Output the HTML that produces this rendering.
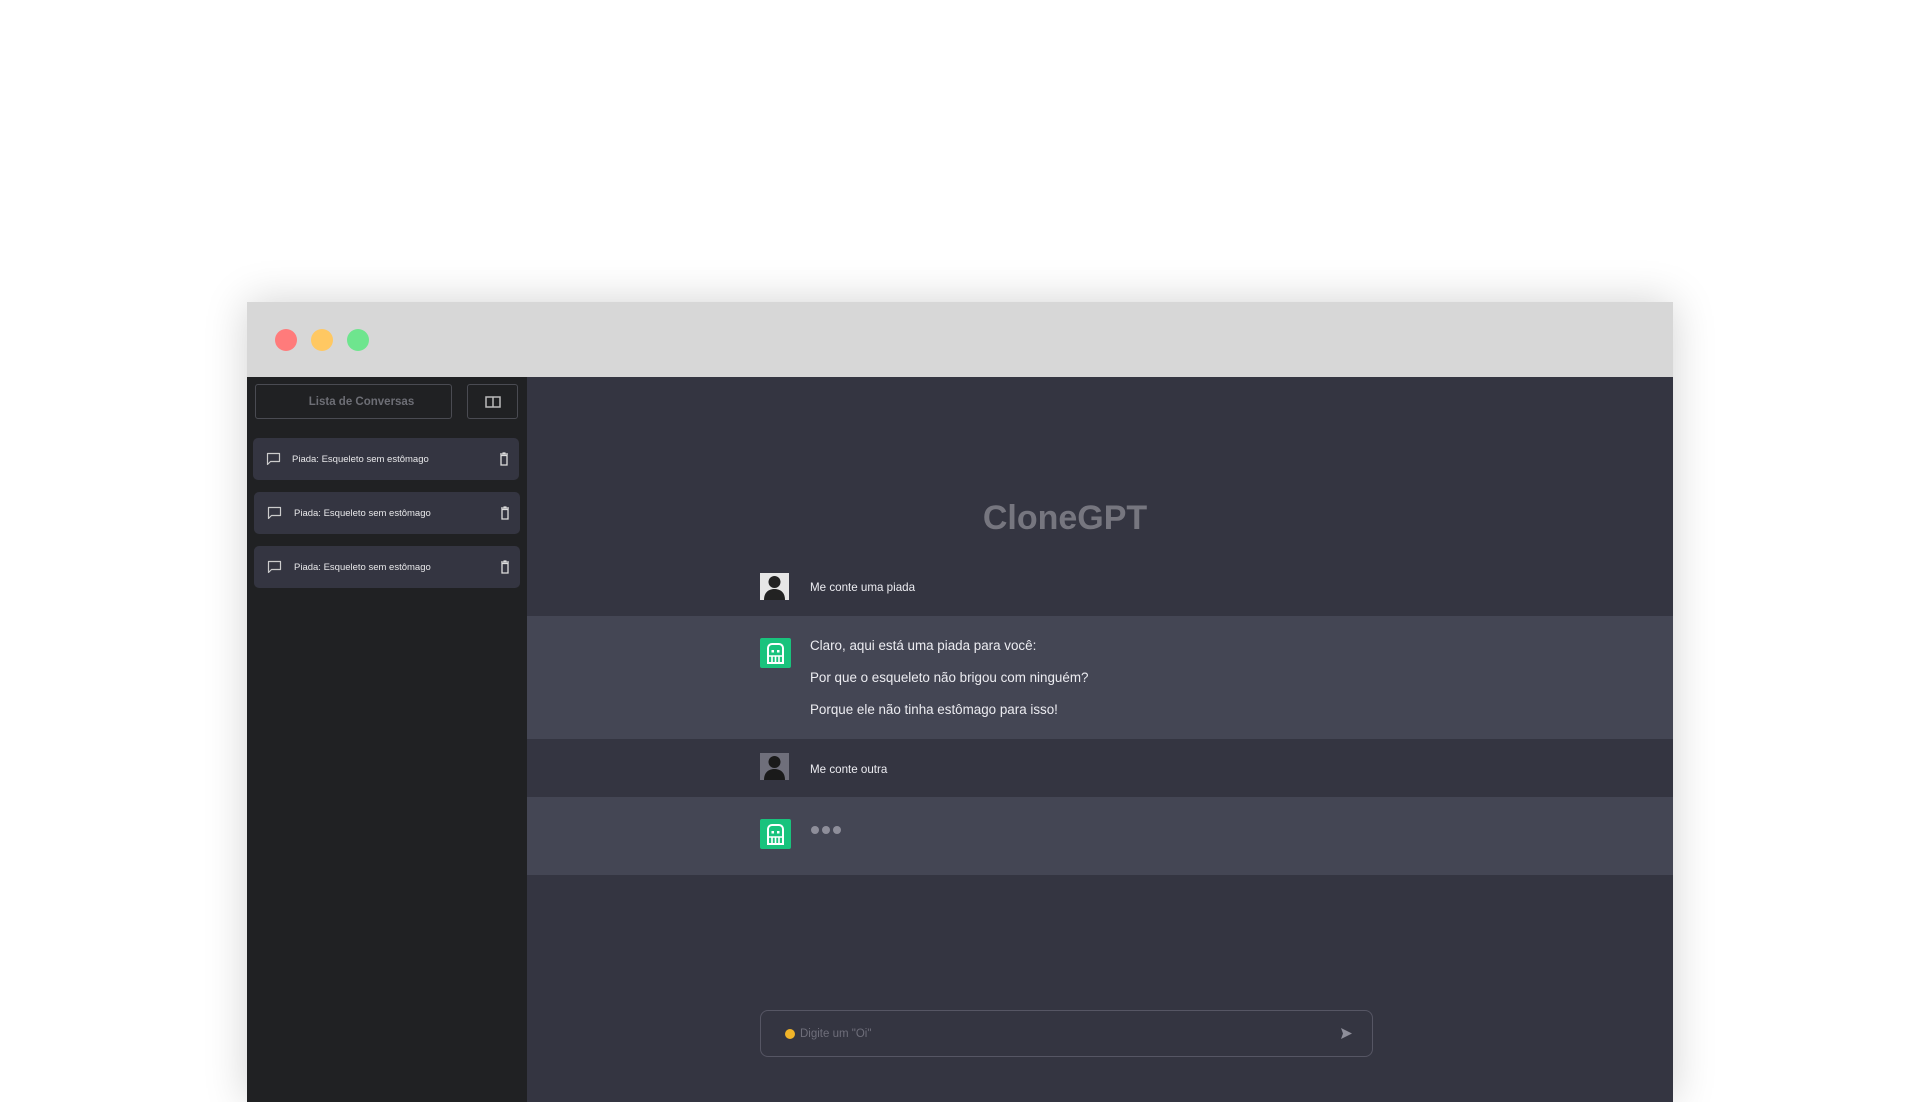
<!DOCTYPE html><html><head><meta charset="utf-8"><style>
*{margin:0;padding:0;box-sizing:border-box}
body{width:1920px;height:1080px;background:#fff;font-family:"Liberation Sans",sans-serif;position:relative;overflow:hidden}
.win{position:absolute;left:247px;top:302px;width:1426px;height:800px;box-shadow:0 0 40px rgba(0,0,0,.18);background:#343541}
.title{position:absolute;left:0;top:0;width:100%;height:75px;background:#d7d7d7}
.dot{position:absolute;top:27px;width:22px;height:22px;border-radius:50%}
.side{position:absolute;left:0;top:75px;width:280px;bottom:0;background:#202123}
.btn{position:absolute;border:1px solid #4a4b52;border-radius:3px;color:#6d6e75;font-weight:bold;font-size:11.5px;display:flex;align-items:center;justify-content:center}
.item{position:absolute;left:6px;width:266px;height:42px;background:#343541;border-radius:5px;color:#e8e8ea;font-size:9.5px;display:flex;align-items:center}
.item svg{position:absolute}
.row{position:absolute;left:280px;right:0}
.av{position:absolute;left:233px;width:30px;height:30px}
.txt{position:absolute;left:563px;color:#ececf1;font-size:13.4px}
</style></head><body>
<div class="win">
<div class="title">
<div class="dot" style="left:28px;background:#ff7b7b"></div>
<div class="dot" style="left:64px;background:#ffc862"></div>
<div class="dot" style="left:100px;background:#6ee58e"></div>
</div>
<div class="side">
<div class="btn" style="left:8px;top:7px;width:197px;height:35px;padding-left:16px">Lista de Conversas</div>
<div class="btn" style="left:220px;top:7px;width:51px;height:35px"><svg width="16" height="12" viewBox="0 0 16 12"><rect x="1" y="1" width="14" height="10" fill="none" stroke="#bbb" stroke-width="1.5"/><line x1="8" y1="1" x2="8" y2="11" stroke="#bbb" stroke-width="1.5"/></svg></div>
<div class="item" style="top:61px">
<svg style="left:13px" width="15" height="14" viewBox="0 0 15 14"><path d="M1.5 1.5h12v8h-9l-3 3z" fill="none" stroke="#ccc" stroke-width="1.2" stroke-linejoin="round"/></svg>
<span style="margin-left:39px">Piada: Esqueleto sem estômago</span>
<svg style="left:246px" width="10" height="14" viewBox="0 0 10 14"><path d="M1 2h8M3.5 1h3M2 3.5h6v9.5h-6z" fill="none" stroke="#ddd" stroke-width="1.3"/></svg></div>
<div class="item" style="top:115px;left:7px">
<svg style="left:13px" width="15" height="14" viewBox="0 0 15 14"><path d="M1.5 1.5h12v8h-9l-3 3z" fill="none" stroke="#ccc" stroke-width="1.2" stroke-linejoin="round"/></svg>
<span style="margin-left:40px">Piada: Esqueleto sem estômago</span>
<svg style="left:246px" width="10" height="14" viewBox="0 0 10 14"><path d="M1 2h8M3.5 1h3M2 3.5h6v9.5h-6z" fill="none" stroke="#ddd" stroke-width="1.3"/></svg></div>
<div class="item" style="top:169px;left:7px">
<svg style="left:13px" width="15" height="14" viewBox="0 0 15 14"><path d="M1.5 1.5h12v8h-9l-3 3z" fill="none" stroke="#ccc" stroke-width="1.2" stroke-linejoin="round"/></svg>
<span style="margin-left:40px">Piada: Esqueleto sem estômago</span>
<svg style="left:246px" width="10" height="14" viewBox="0 0 10 14"><path d="M1 2h8M3.5 1h3M2 3.5h6v9.5h-6z" fill="none" stroke="#ddd" stroke-width="1.3"/></svg></div>
</div>
<div style="position:absolute;left:618px;width:400px;top:197px;text-align:center;color:#76767f;font-weight:bold;font-size:34px">CloneGPT</div>
<div class="row" style="top:256px;height:58px">
<div class="av" style="left:233px;top:15px;width:29px;height:27px;background:#e6e6e6;overflow:hidden"><svg width="29" height="27" viewBox="0 0 29 27"><circle cx="14.5" cy="9" r="6" fill="#222"/><path d="M4 27c0-8 5-11 10.5-11S25 19 25 27z" fill="#222"/></svg></div>
<div class="txt" style="left:283px;top:23px;font-size:11.6px">Me conte uma piada</div></div>
<div class="row" style="top:314px;height:123px;background:#444654">
<div class="av" style="top:22px;width:31px;background:#19c37d;border-radius:2px"><svg width="31" height="30" viewBox="0 0 31 30"><path d="M8 25V10a4 4 0 0 1 4-4h7a4 4 0 0 1 4 4v15z" fill="none" stroke="#fff" stroke-width="2"/><rect x="11.5" y="12" width="2.5" height="2.5" fill="#fff"/><rect x="17" y="12" width="2.5" height="2.5" fill="#fff"/><path d="M8 18h15M12 18v7M15.5 18v7M19 18v7" stroke="#fff" stroke-width="1.6"/></svg></div>
<div class="txt" style="left:283px;top:22px">Claro, aqui está uma piada para você:</div>
<div class="txt" style="left:283px;top:54px">Por que o esqueleto não brigou com ninguém?</div>
<div class="txt" style="left:283px;top:86px">Porque ele não tinha estômago para isso!</div></div>
<div class="row" style="top:437px;height:58px">
<div class="av" style="left:233px;top:14px;width:29px;height:27px;background:#6f6f7b"><svg width="29" height="27" viewBox="0 0 29 27"><circle cx="14.5" cy="9" r="6" fill="#1a1a1a"/><path d="M4 27c0-8 5-11 10.5-11S25 19 25 27z" fill="#1a1a1a"/></svg></div>
<div class="txt" style="left:283px;top:24px;font-size:11.6px">Me conte outra</div></div>
<div class="row" style="top:495px;height:78px;background:#444654">
<div class="av" style="top:22px;width:31px;background:#19c37d;border-radius:2px"><svg width="31" height="30" viewBox="0 0 31 30"><path d="M8 25V10a4 4 0 0 1 4-4h7a4 4 0 0 1 4 4v15z" fill="none" stroke="#fff" stroke-width="2"/><rect x="11.5" y="12" width="2.5" height="2.5" fill="#fff"/><rect x="17" y="12" width="2.5" height="2.5" fill="#fff"/><path d="M8 18h15M12 18v7M15.5 18v7M19 18v7" stroke="#fff" stroke-width="1.6"/></svg></div>
<div style="position:absolute;left:284px;top:29px;display:flex;gap:3px"><i style="width:8px;height:8px;border-radius:50%;background:#8e8e9a"></i><i style="width:8px;height:8px;border-radius:50%;background:#8e8e9a"></i><i style="width:8px;height:8px;border-radius:50%;background:#8e8e9a"></i></div></div>
<div style="position:absolute;left:513px;top:708px;width:613px;height:47px;border:1.5px solid #565664;border-radius:8px">
<div style="position:absolute;left:24px;top:18px;width:10px;height:10px;border-radius:50%;background:#f0b429"></div>
<div style="position:absolute;left:39px;top:17px;color:#6e6e7a;font-size:11.5px">Digite um "Oi"</div>
<svg style="position:absolute;right:19px;top:16px" width="13" height="13" viewBox="0 0 13 13"><path d="M1 1l11 5.5L1 12l2-5.5z" fill="#8e8e9a"/></svg>
</div>
</div>
</body></html>
